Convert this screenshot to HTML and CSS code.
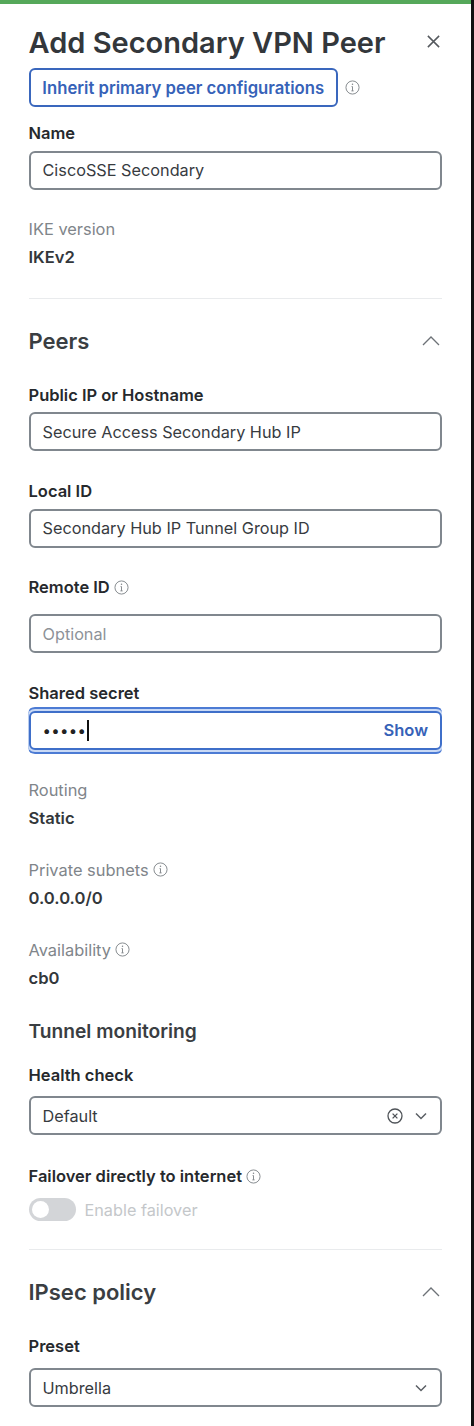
FILE: index.html
```html
<!DOCTYPE html>
<html lang="en">
<head>
<meta charset="utf-8">
<title>Add Secondary VPN Peer</title>
<link rel="stylesheet" href="styles.css">
</head>
<body>
<div class="panel">
  <div class="content">
    <header class="head">
      <h1 class="title">Add Secondary VPN Peer</h1>
      <svg class="close" viewBox="0 0 16 16"><path d="M2 2l12 12M14 2L2 14"/></svg>
    </header>
    <div class="inherit-row">
      <button class="inherit">Inherit primary peer configurations</button>
      <svg class="info" viewBox="0 0 16 16"><circle cx="8" cy="8" r="7"/><path d="M8 7v4.6M6.8 11.6h2.4M7 7h1"/><circle class="dot" cx="8" cy="4.6" r=".8"/></svg>
    </div>
    <div class="label name-label">Name</div>
    <div class="field">CiscoSSE Secondary</div>
    <div class="muted ike">IKE version</div>
    <div class="value">IKEv2</div>
    <hr class="rule first-rule">
    <div class="section-head">
      <h2 class="section">Peers</h2>
      <svg class="caret" viewBox="0 0 18 10"><path d="M1 9l8-8 8 8"/></svg>
    </div>
    <div class="label public-label">Public IP or Hostname</div>
    <div class="field">Secure Access Secondary Hub IP</div>
    <div class="label next-label">Local ID</div>
    <div class="field">Secondary Hub IP Tunnel Group ID</div>
    <div class="label next-label remote-label with-info">Remote ID
      <svg class="info" viewBox="0 0 16 16"><circle cx="8" cy="8" r="7"/><path d="M8 7v4.6M6.8 11.6h2.4M7 7h1"/><circle class="dot" cx="8" cy="4.6" r=".8"/></svg>
    </div>
    <div class="field placeholder">Optional</div>
    <div class="label next-label">Shared secret</div>
    <div class="field focused">
      <span class="secret">•••••</span><span class="cursor"></span>
      <span class="show">Show</span>
    </div>
    <div class="muted routing">Routing</div>
    <div class="value">Static</div>
    <div class="muted gap with-info">Private subnets
      <svg class="info" viewBox="0 0 16 16"><circle cx="8" cy="8" r="7"/><path d="M8 7v4.6M6.8 11.6h2.4M7 7h1"/><circle class="dot" cx="8" cy="4.6" r=".8"/></svg>
    </div>
    <div class="value">0.0.0.0/0</div>
    <div class="muted gap with-info">Availability
      <svg class="info" viewBox="0 0 16 16"><circle cx="8" cy="8" r="7"/><path d="M8 7v4.6M6.8 11.6h2.4M7 7h1"/><circle class="dot" cx="8" cy="4.6" r=".8"/></svg>
    </div>
    <div class="value">cb0</div>
    <h3 class="sub">Tunnel monitoring</h3>
    <div class="label health-label">Health check</div>
    <div class="field select">
      <span class="grow">Default</span>
      <svg class="clear" viewBox="0 0 16 16"><circle cx="8" cy="8" r="7"/><path d="M5.6 5.6l4.8 4.8M10.4 5.6l-4.8 4.8"/></svg>
      <svg class="chev" viewBox="0 0 12 8"><path d="M1 1.5l5 5 5-5"/></svg>
    </div>
    <div class="label failover-label with-info">Failover directly to internet
      <svg class="info" viewBox="0 0 16 16"><circle cx="8" cy="8" r="7"/><path d="M8 7v4.6M6.8 11.6h2.4M7 7h1"/><circle class="dot" cx="8" cy="4.6" r=".8"/></svg>
    </div>
    <div class="toggle-row">
      <span class="toggle"><span class="knob"></span></span>
      <span class="toggle-text">Enable failover</span>
    </div>
    <hr class="rule second-rule">
    <div class="section-head">
      <h2 class="section">IPsec policy</h2>
      <svg class="caret" viewBox="0 0 18 10"><path d="M1 9l8-8 8 8"/></svg>
    </div>
    <div class="label preset-label">Preset</div>
    <div class="field select">
      <span class="grow">Umbrella</span>
      <svg class="chev" viewBox="0 0 12 8"><path d="M1 1.5l5 5 5-5"/></svg>
    </div>
  </div>
</div>
</body>
</html>
```
FILE: styles.css
```css
* { box-sizing: border-box; }
html, body { margin: 0; padding: 0; height: 100%; }
body {
  background: #111;
  font-family: Inter, "Liberation Sans", sans-serif;
  color: #2b2f33;
  overflow: hidden;
}
.panel {
  width: 471px;
  height: 1426px;
  background: #fff;
  border-top: 4px solid #55a85a;
  overflow: hidden;
}
.content { padding: 0 29px 0 28.5px; }
.head {
  display: flex;
  align-items: center;
  justify-content: space-between;
  height: 64px;
  padding-top: 12px;
}
.title {
  margin: 0;
  font-size: 29px;
  font-weight: 600;
  color: #33373b;
  white-space: nowrap;
}
.close { width: 15px; height: 15px; margin-right: 1px; margin-top: -2px; fill: none; stroke: #55595e; stroke-width: 1.6; }
.inherit-row { display: flex; align-items: center; gap: 7px; }
.inherit {
  width: 309.5px;
  height: 39px;
  padding: 0;
  background: #fff;
  border: 2px solid #3a67bd;
  border-radius: 6px;
  color: #3662b8;
  font: 600 16.7px Inter, "Liberation Sans", sans-serif;
}
.info { width: 15px; height: 15px; fill: none; stroke: #80858a; stroke-width: 1; flex: none; }
.info .dot { fill: #80858a; stroke: none; }
.label {
  font-size: 16.5px;
  font-weight: 600;
  line-height: 20px;
  color: #26292d;
}
.name-label { margin-top: 16px; margin-bottom: 7.5px; }
.public-label { margin-bottom: 7px; }
.next-label { margin-top: 29.5px; margin-bottom: 8px; }
.remote-label { margin-bottom: 17px; }
.preset-label { margin-bottom: 12px; }
.health-label { margin-top: 22px; margin-bottom: 11.5px; }
.failover-label { margin-top: 31px; }
.with-info { display: flex; align-items: center; gap: 4px; }
.field {
  display: flex;
  align-items: center;
  height: 39px;
  padding: 0 12px;
  background: #fff;
  border: 2px solid #80878e;
  border-radius: 6px;
  font-size: 16.25px;
  color: #373b3f;
}
.placeholder { color: #8d9298; }
.focused {
  border-color: #3f6fc9;
  box-shadow: 0 0 0 2px #c9d9f5, 0 0 0 4px #4c7bd4;
  clip-path: inset(-4px 0 -5px 0 round 6px);
}
.secret { font-size: 15px; letter-spacing: 0.3px; color: #222; }
.cursor { width: 1.5px; height: 21px; background: #111; margin-left: 1px; }
.show { margin-left: auto; font-weight: 600; font-size: 16.5px; color: #3662b8; }
.muted { font-size: 16.4px; line-height: 20px; color: #80858a; }
.ike { margin-top: 29.5px; }
.routing { margin-top: 30px; }
.gap { margin-top: 32px; }
.value { margin-top: 8px; font-size: 16.6px; font-weight: 600; line-height: 20px; color: #33373b; }
.rule { margin: 0; border: 0; border-top: 1px solid #e9ebed; }
.first-rule { margin-top: 31px; }
.second-rule { margin-top: 28px; }
.section-head {
  display: flex;
  align-items: center;
  justify-content: space-between;
  height: 86px;
  padding-bottom: 3px;
}
.section { margin: 0; font-size: 22px; font-weight: 600; color: #3a3e42; }
.caret { width: 18px; height: 10px; margin-right: 2px; fill: none; stroke: #6d7277; stroke-width: 1.3; }
.sub { margin: 31px 0 0; font-size: 19.2px; font-weight: 600; line-height: 24px; color: #3a3e42; }
.select { gap: 0; }
.grow { flex: 1; }
.clear { width: 16px; height: 16px; margin-right: 12px; fill: none; stroke: #4f5358; stroke-width: 1.3; }
.chev { width: 12px; height: 8px; margin-right: 1px; fill: none; stroke: #5a5f64; stroke-width: 1.5; }
.toggle-row { display: flex; align-items: center; gap: 9px; margin-top: 12px; }
.toggle { display: flex; align-items: center; width: 47px; height: 23px; padding: 0 3px; background: #d3d5d8; border-radius: 12px; }
.knob { width: 17px; height: 17px; background: #fff; border-radius: 50%; }
.toggle-text { font-size: 16.25px; color: #c4c7ca; }
```
